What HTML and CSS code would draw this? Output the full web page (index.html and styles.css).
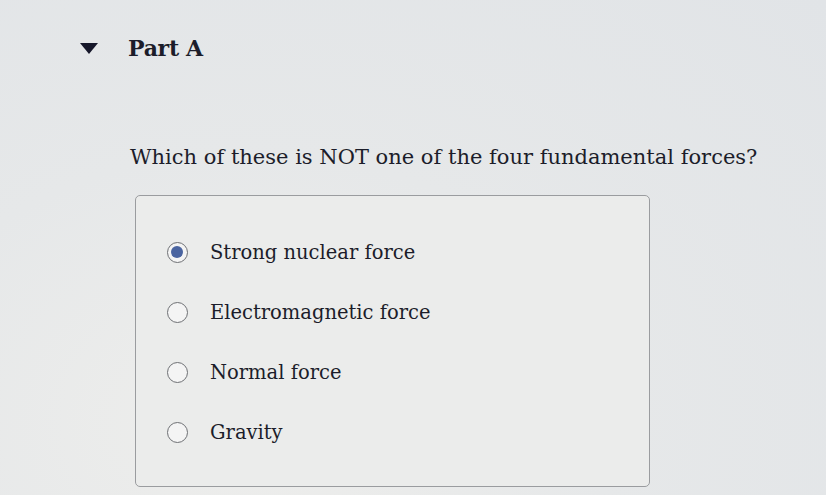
FILE: index.html
```html
<!DOCTYPE html>
<html>
<head>
  <meta charset="utf-8">
  <title>Part A</title>
  <link rel="stylesheet" href="styles.css">
</head>
<body>
<div class="page">
  <div class="part-head">
    <span class="caret"></span>
    <h2>Part A</h2>
  </div>

  <p class="question">Which of these is NOT one of the four fundamental forces?</p>

  <ul class="choices">
    <li class="checked"><span class="radio"></span>Strong nuclear force</li>
    <li><span class="radio"></span>Electromagnetic force</li>
    <li><span class="radio"></span>Normal force</li>
    <li><span class="radio"></span>Gravity</li>
  </ul>
</div>
</body>
</html>
```

FILE: styles.css
```css
*{
  margin: 0;
  padding: 0;
  list-style: none;
}
body{
  background: #e4e6e8;
  font-family: "DejaVu Serif", "Liberation Serif", serif;
  color: #1c1d2a;
}
.page{
  width: 826px;
  height: 495px;
  padding: 30px 0 0 80px;
  box-sizing: border-box;
  background: radial-gradient(ellipse at 30% 85%, #eeeeec 0%, #e6e8e9 45%, #e1e4e7 100%);
}
.part-head{
  display: flex;
  align-items: center;
  height: 36px;
}
.caret{
  width: 0;
  height: 0;
  border-left: 9px solid transparent;
  border-right: 9px solid transparent;
  border-top: 11px solid #16172a;
  margin-right: 30px;
}
.part-head h2{
  font-size: 22px;
  font-weight: bold;
  letter-spacing: -0.3px;
}
.question{
  margin: 77px 0 0 50px;
  font-size: 21px;
  line-height: 28px;
}
.choices{
  width: 515px;
  height: 292px;
  margin: 24px 0 0 55px;
  border: 1px solid #9a9c9f;
  border-radius: 5px;
  background: #ebeceb;
  box-sizing: border-box;
  padding: 26px 0 0 31px;
}
.choices li{
  display: flex;
  align-items: center;
  height: 60px;
  font-size: 19.5px;
}
.radio{
  width: 21px;
  height: 21px;
  border: 1.5px solid #6e7074;
  border-radius: 50%;
  background: #f4f4f4;
  margin-right: 22px;
  box-sizing: border-box;
  position: relative;
}
.checked .radio::after{
  content: "";
  position: absolute;
  left: 3px;
  top: 3px;
  width: 12px;
  height: 12px;
  border-radius: 50%;
  background: #4a64a0;
}
```
